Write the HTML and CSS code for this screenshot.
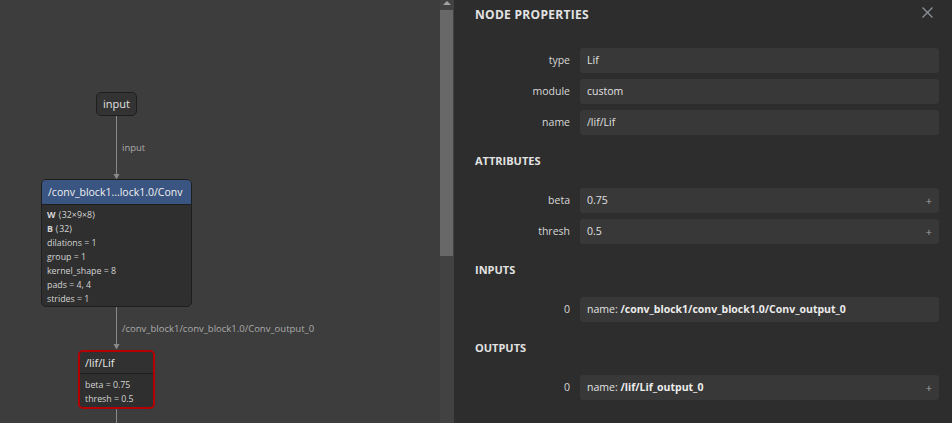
FILE: index.html
```html
<!DOCTYPE html>
<html>
<head>
  <link rel="stylesheet" href="styles.css">
</head>
<body>
  <div class="canvas">
    <!-- Graph -->
    <div class="graph">
      <svg class="edges" width="440" height="423">
        <line x1="116.5" y1="116" x2="116.5" y2="175" />
        <polygon points="113.5,174 116.5,179.5 119.5,174" />
        <text x="122" y="151">input</text>
        <line x1="116.5" y1="307" x2="116.5" y2="345" />
        <polygon points="113.5,344 116.5,349.5 119.5,344" />
        <text x="122" y="331.5">/conv_block1/conv_block1.0/Conv_output_0</text>
        <line x1="116.5" y1="409" x2="116.5" y2="423" />
      </svg>

      <div class="node node-input">input</div>

      <div class="node node-conv">
        <div class="node-title layer">/conv_block1...lock1.0/Conv</div>
        <div class="node-attrs">
          <div><b>W</b> ⟨32×9×8⟩</div>
          <div><b>B</b> ⟨32⟩</div>
          <div>dilations = 1</div>
          <div>group = 1</div>
          <div>kernel_shape = 8</div>
          <div>pads = 4, 4</div>
          <div>strides = 1</div>
        </div>
      </div>

      <div class="node node-lif selected">
        <div class="node-title">/lif/Lif</div>
        <div class="node-attrs">
          <div>beta = 0.75</div>
          <div>thresh = 0.5</div>
        </div>
      </div>
    </div>

    <!-- Scrollbar -->
    <div class="scrollbar">
      <div class="scroll-arrow"></div>
      <div class="scroll-thumb"></div>
    </div>
  </div>

  <!-- Sidebar -->
  <div class="sidebar">
    <div class="sidebar-header">
      <span class="sidebar-title">NODE PROPERTIES</span>
      <svg class="close" width="11" height="11" viewBox="0 0 11 11">
        <path d="M0.5 0.5 L10.5 10.5 M10.5 0.5 L0.5 10.5" />
      </svg>
    </div>

    <div class="props first">
      <div class="prop-name">type</div>
      <div class="prop-value">Lif</div>
      <div class="prop-name">module</div>
      <div class="prop-value">custom</div>
      <div class="prop-name">name</div>
      <div class="prop-value">/lif/Lif</div>
    </div>

    <div class="section-title">ATTRIBUTES</div>
    <div class="props">
      <div class="prop-name">beta</div>
      <div class="prop-value">0.75<span class="expand">+</span></div>
      <div class="prop-name">thresh</div>
      <div class="prop-value">0.5<span class="expand">+</span></div>
    </div>

    <div class="section-title">INPUTS</div>
    <div class="props">
      <div class="prop-name">0</div>
      <div class="prop-value"><span>name: <b>/conv_block1/conv_block1.0/Conv_output_0</b></span></div>
    </div>

    <div class="section-title">OUTPUTS</div>
    <div class="props">
      <div class="prop-name">0</div>
      <div class="prop-value"><span>name: <b>/lif/Lif_output_0</b></span><span class="expand">+</span></div>
    </div>
  </div>
</body>
</html>
```

FILE: styles.css
```css
body {
  margin: 0;
  height: 423px;
  display: flex;
  overflow: hidden;
  font-family: 'Open Sans', sans-serif;
  color: #dcdcdc;
}

/* Graph canvas */
.canvas {
  width: 454px;
  display: flex;
  background: #3d3d3d;
}

.graph {
  flex: 1;
  position: relative;
}

.edges {
  position: absolute;
  left: 0;
  top: 0;
}

.edges line {
  stroke: #8a8a8a;
  stroke-width: 1;
}

.edges polygon {
  fill: #8a8a8a;
}

.edges text {
  font-family: 'Open Sans', sans-serif;
  font-size: 9.5px;
  fill: #ababab;
}

.node {
  position: absolute;
  box-sizing: border-box;
  background: #2f2f2f;
  border: 1px solid #1e1e1e;
  border-radius: 5px;
  overflow: hidden;
  font-size: 11px;
}

.node-input {
  left: 96px;
  top: 92px;
  width: 41px;
  height: 24px;
  background: #333;
  text-align: center;
  line-height: 22px;
  color: #e0e0e0;
}

.node-conv {
  left: 41px;
  top: 179px;
  width: 151px;
  height: 128px;
}

.node-lif {
  left: 78px;
  top: 350px;
  width: 77px;
  height: 59px;
}

.node.selected {
  border: 2px solid #b40000;
}

.node-title {
  height: 24px;
  line-height: 24px;
  padding-left: 6px;
  color: #e6e6e6;
  border-bottom: 1px solid #1e1e1e;
  background: #313131;
}

.node-title.layer {
  background: #3a5581;
  color: #f0f0f0;
  font-size: 10.5px;
}

.node-lif .node-title {
  height: 21px;
  line-height: 22px;
  padding-left: 5px;
}

.node-attrs {
  padding: 3px 5px 0;
  font-size: 8.8px;
  line-height: 14px;
  color: #d4d4d4;
}

.node-lif .node-attrs {
  padding-top: 4px;
}

/* Scrollbar */
.scrollbar {
  width: 14px;
  background: #424242;
  display: flex;
  flex-direction: column;
  align-items: center;
}

.scroll-arrow {
  margin-top: 1px;
  width: 0;
  height: 0;
  border-left: 4px solid transparent;
  border-right: 4px solid transparent;
  border-bottom: 4px solid #a3a3a3;
}

.scroll-thumb {
  margin-top: 5px;
  width: 13px;
  height: 246px;
  align-self: flex-start;
  background: #686868;
}

/* Sidebar */
.sidebar {
  flex: 1;
  background: #2d2d2d;
  padding: 0 13px 0 21px;
  font-size: 10.5px;
}

.sidebar-header {
  height: 28px;
  display: flex;
  justify-content: space-between;
  align-items: center;
}

.sidebar-title {
  font-size: 12px;
  font-weight: bold;
  letter-spacing: 0.3px;
  color: #e2e2e2;
}

.close {
  margin-right: 6px;
  margin-bottom: 3px;
}

.close path {
  stroke: #8a8f96;
  stroke-width: 1.4;
}

.section-title {
  margin: 16px 0 17px;
  height: 20px;
  line-height: 20px;
  font-size: 11px;
  font-weight: bold;
  color: #e2e2e2;
}

.props {
  display: grid;
  grid-template-columns: 95px 1fr;
  column-gap: 10px;
  row-gap: 6px;
}

.props.first {
  margin-top: 20px;
}

.prop-name {
  text-align: right;
  line-height: 25px;
  color: #d8d8d8;
}

.prop-value {
  height: 25px;
  line-height: 25px;
  padding: 0 7px;
  background: #383838;
  border-radius: 3px;
  display: flex;
  justify-content: space-between;
  color: #e0e0e0;
}

.prop-value b {
  color: #ececec;
}

.expand {
  font-size: 11px;
  color: #a0a6ad;
}
```
